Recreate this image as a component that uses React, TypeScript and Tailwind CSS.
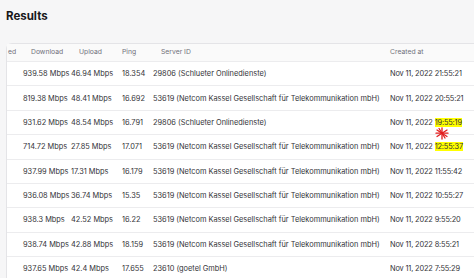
import React from "react";

const rows = [
  { down: "939.58 Mbps", up: "46.94 Mbps", ping: "18.354", server: "29806 (Schlueter Onlinedienste)", date: "Nov 11, 2022", time: "21:55:21" },
  { down: "819.38 Mbps", up: "48.41 Mbps", ping: "16.692", server: "53619 (Netcom Kassel Gesellschaft für Telekommunikation mbH)", date: "Nov 11, 2022", time: "20:55:21" },
  { down: "931.62 Mbps", up: "48.54 Mbps", ping: "16.791", server: "29806 (Schlueter Onlinedienste)", date: "Nov 11, 2022", time: "19:55:19", mark: true },
  { down: "714.72 Mbps", up: "27.85 Mbps", ping: "17.071", server: "53619 (Netcom Kassel Gesellschaft für Telekommunikation mbH)", date: "Nov 11, 2022", time: "12:55:37", mark: true },
  { down: "937.99 Mbps", up: "17.31 Mbps", ping: "16.179", server: "53619 (Netcom Kassel Gesellschaft für Telekommunikation mbH)", date: "Nov 11, 2022", time: "11:55:42" },
  { down: "936.08 Mbps", up: "36.74 Mbps", ping: "15.35", server: "53619 (Netcom Kassel Gesellschaft für Telekommunikation mbH)", date: "Nov 11, 2022", time: "10:55:27" },
  { down: "938.3 Mbps", up: "42.52 Mbps", ping: "16.22", server: "53619 (Netcom Kassel Gesellschaft für Telekommunikation mbH)", date: "Nov 11, 2022", time: "9:55:20" },
  { down: "938.74 Mbps", up: "42.88 Mbps", ping: "18.159", server: "53619 (Netcom Kassel Gesellschaft für Telekommunikation mbH)", date: "Nov 11, 2022", time: "8:55:21" },
  { down: "937.65 Mbps", up: "42.4 Mbps", ping: "17.655", server: "23610 (goetel GmbH)", date: "Nov 11, 2022", time: "7:55:29" },
];

export default function App() {
  return (
    <div className="relative w-[474px] h-[278px] overflow-hidden bg-[#f6f6f7] font-['Inter',sans-serif] text-[#333338]">
      {/* Page title */}
      <div className="h-[43px] pl-[6px] pt-[8px]">
        <h1 className="text-[11.5px] font-bold text-[#18181b] leading-[16px]">Results</h1>
      </div>

      {/* Table card */}
      <div className="ml-[6px] w-[520px] bg-white border-l border-t border-[#e4e4e7] rounded-tl-md">
        {/* Header */}
        <div className="flex items-center h-[18px] bg-[#fafafa] border-b border-[#ececee] text-[6.8px] text-[#71717a]">
          <div className="w-[16px] pl-[1px]">ed</div>
          <div className="w-[48px] pl-[8px]">Download</div>
          <div className="w-[51px] pl-[8px]">Upload</div>
          <div className="w-[31px]">Ping</div>
          <div className="w-[237px] pl-[8px]">Server ID</div>
          <div>Created at</div>
        </div>

        {rows.map((r, i) => (
          <div key={i} className="flex items-center h-[24.4px] border-b border-[#ececee] text-[7.4px] whitespace-nowrap">
            <div className="w-[16px] shrink-0" />
            <div className="w-[48px] shrink-0">{r.down}</div>
            <div className="w-[51px] shrink-0">{r.up}</div>
            <div className="w-[31px] shrink-0">{r.ping}</div>
            <div className="w-[237px] shrink-0 overflow-hidden">{r.server}</div>
            <div className="shrink-0 tracking-[-0.02em]">
              {r.date}{" "}
              <span className={r.mark ? "bg-[#ffff00]" : ""}>{r.time}</span>
            </div>
          </div>
        ))}
      </div>

      {/* red annotation star */}
      <svg className="absolute left-[435px] top-[127px]" width="14" height="13" viewBox="0 0 14 13">
        <g stroke="#e11d1d" strokeWidth="1.3" strokeLinecap="round" fill="none">
          <path d="M2 3 L12 9.5" />
          <path d="M2 9.5 L12 3" />
          <path d="M7 0.8 L7 12" />
          <path d="M1 6.2 L13 6.2" />
          <path d="M4 1.5 L10 11" />
        </g>
      </svg>
    </div>
  );
}
